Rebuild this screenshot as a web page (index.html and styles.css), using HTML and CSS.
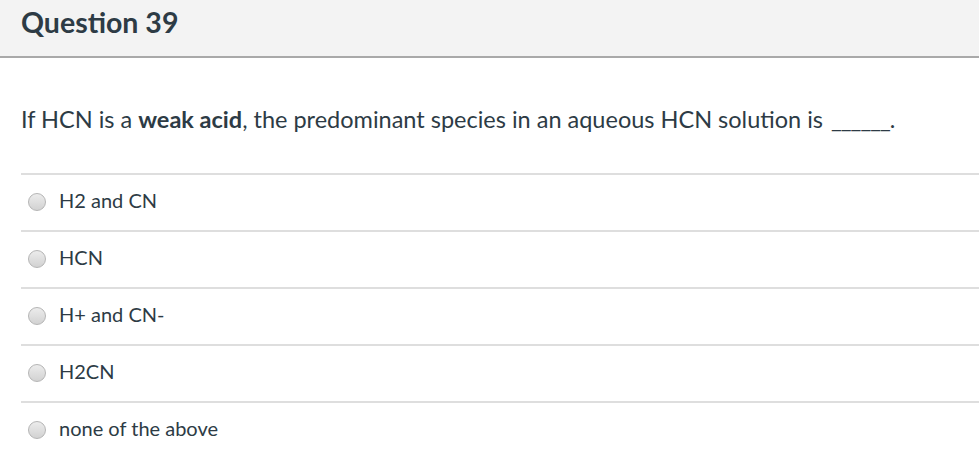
FILE: index.html
```html
<!DOCTYPE html>
<html>
<head>
<meta charset="utf-8">
<link rel="stylesheet" href="styles.css">
</head>
<body>
<div class="quiz">
  <div class="header"><h2 class="title">Question 39</h2></div>
  <div class="body">
    <p class="question">If HCN is a <strong>weak acid</strong>, the predominant species in an aqueous HCN solution is <span class="blank">______</span>.</p>
    <ul class="answers">
      <li class="answer"><span class="radio"></span><span class="label">H2 and CN</span></li>
      <li class="answer"><span class="radio"></span><span class="label">HCN</span></li>
      <li class="answer"><span class="radio"></span><span class="label">H+ and CN-</span></li>
      <li class="answer"><span class="radio"></span><span class="label">H2CN</span></li>
      <li class="answer"><span class="radio"></span><span class="label">none of the above</span></li>
    </ul>
  </div>
</div>
</body>
</html>
```

FILE: styles.css
```css
html, body {
  margin: 0;
  padding: 0;
  background: #fff;
}
body {
  font-family: Lato, "Liberation Sans", sans-serif;
  color: #2d3b45;
}
.header {
  background: #f3f3f3;
  border-bottom: 2px solid #a9a9a9;
  height: 58px;
  box-sizing: border-box;
  padding-left: 21px;
  display: flex;
  align-items: center;
}
.title {
  margin: 0;
  font-size: 28.5px;
  font-weight: 700;
  line-height: 1;
  position: relative;
  top: -6px;
}
.body {
  padding-left: 21px;
}
.question {
  margin: 0;
  padding-top: 46px;
  font-size: 23.5px;
  line-height: 30px;
  height: 69px;
}
.question strong {
  font-weight: 700;
}
.blank {
  letter-spacing: -1px;
  margin-left: 2px;
}
.answers {
  list-style: none;
  margin: 0;
  padding: 0;
}
.answer {
  border-top: 2px solid #dedede;
  height: 57px;
  box-sizing: border-box;
  display: flex;
  align-items: center;
  padding-left: 7px;
}
.radio {
  width: 18px;
  height: 18px;
  border-radius: 50%;
  box-sizing: border-box;
  border: 1px solid #b5b5b5;
  background: linear-gradient(#ececec, #d2d2d2);
  margin-right: 13px;
  margin-bottom: 2px;
  flex: none;
}
.label {
  font-size: 20px;
  margin-bottom: 6px;
}
```
